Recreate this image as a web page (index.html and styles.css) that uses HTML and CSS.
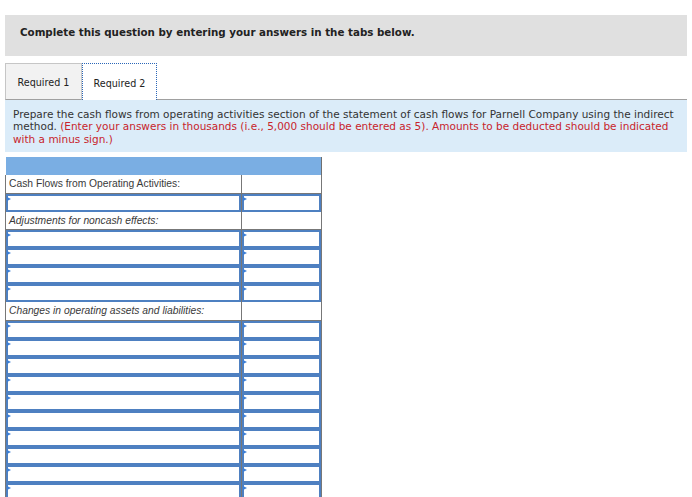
FILE: index.html
```html
<!DOCTYPE html>
<html>
<head>
<meta charset="utf-8">
<link rel="stylesheet" href="styles.css">
</head>
<body>
<div class="page">
  <div class="banner">Complete this question by entering your answers in the tabs below.</div>
  <div class="tabs">
    <div class="tab">Required 1</div>
    <div class="tab active">Required 2</div>
    <div class="tab-fill"></div>
  </div>
  <div class="instructions">Prepare the cash flows from operating activities section of the statement of cash flows for Parnell Company using the indirect method. <span class="red">(Enter your answers in thousands (i.e., 5,000 should be entered as 5). Amounts to be deducted should be indicated with a minus sign.)</span></div>
  <table class="sheet">
    <colgroup><col class="w1"><col class="w2"></colgroup>
    <tr class="head"><td colspan="2"></td></tr>
    <tr class="label"><td class="c1">Cash Flows from Operating Activities:</td><td class="c2"></td></tr>
    <tr class="in"><td><div class="box"></div></td><td><div class="box"></div></td></tr>
    <tr class="label"><td class="c1 it">Adjustments for noncash effects:</td><td class="c2"></td></tr>
    <tr class="in"><td><div class="box"></div></td><td><div class="box"></div></td></tr>
    <tr class="in"><td><div class="box"></div></td><td><div class="box"></div></td></tr>
    <tr class="in"><td><div class="box"></div></td><td><div class="box"></div></td></tr>
    <tr class="in"><td><div class="box"></div></td><td><div class="box"></div></td></tr>
    <tr class="label"><td class="c1 it">Changes in operating assets and liabilities:</td><td class="c2"></td></tr>
    <tr class="in"><td><div class="box"></div></td><td><div class="box"></div></td></tr>
    <tr class="in"><td><div class="box"></div></td><td><div class="box"></div></td></tr>
    <tr class="in"><td><div class="box"></div></td><td><div class="box"></div></td></tr>
    <tr class="in"><td><div class="box"></div></td><td><div class="box"></div></td></tr>
    <tr class="in"><td><div class="box"></div></td><td><div class="box"></div></td></tr>
    <tr class="in"><td><div class="box"></div></td><td><div class="box"></div></td></tr>
    <tr class="in"><td><div class="box"></div></td><td><div class="box"></div></td></tr>
    <tr class="in"><td><div class="box"></div></td><td><div class="box"></div></td></tr>
    <tr class="in"><td><div class="box"></div></td><td><div class="box"></div></td></tr>
    <tr class="in"><td><div class="box"></div></td><td><div class="box"></div></td></tr>
  </table>
</div>
</body>
</html>
```
FILE: styles.css
```css
html, body { margin: 0; padding: 0; background: #fff; }
body { overflow: hidden; }
.page { padding: 15px 5px 0 5px; }
.banner {
  background: #e0e0e0;
  height: 41px;
  box-sizing: border-box;
  padding: 11px 0 0 15px;
  font-family: "DejaVu Sans", Verdana, sans-serif;
  font-weight: bold;
  font-size: 10.3px;
  line-height: 13px;
  color: #222;
}
.tabs {
  margin-top: 7px;
  display: flex;
  height: 37px;
}
.tab {
  width: 75px;
  border: 1px solid #c6c6c6;
  border-bottom: 1px solid #a0a0a0;
  background: #f2f2f2;
  font-family: "DejaVu Sans", Tahoma, sans-serif;
  font-size: 9.6px;
  color: #222;
  display: flex;
  align-items: center;
  justify-content: center;
  padding-top: 2px;
}
.tab.active {
  width: 73px;
  background: #fff;
  border: 1px dotted #2a66b8;
  border-bottom: none;
}
.tab-fill { flex: 1; border-bottom: 1px solid #a0a0a0; }
.instructions {
  background: #dbecf9;
  height: 52px;
  box-sizing: border-box;
  padding: 8px 8px 0 8px;
  font-family: "DejaVu Sans", Verdana, sans-serif;
  font-size: 10.5px;
  line-height: 12.4px;
  color: #333;
}
.red { color: #c8242c; }
.sheet {
  margin-top: 5px;
  border-collapse: collapse;
  table-layout: fixed;
  width: 316px;
  font-family: "Liberation Sans", Arial, sans-serif;
  font-size: 10.3px;
  color: #3a3a3a;
}
.w1 { width: 236px; }
.w2 { width: 80px; }
.sheet td { padding: 0; }
.sheet tr { height: 18px; }
.head td { background: #7aaee3; height: 18px; border-right: 1px solid #6f6f6f; }
.label td { border: 1px solid #777; border-top: none; white-space: nowrap; overflow: hidden; }
.label td.c1 { padding-left: 3px; }
.it { font-style: italic; }
.in td { border-left: 1px solid #777; border-right: 1px solid #777; }
.box {
  position: relative;
  height: 14px;
  border: 2px solid #4e80c1;
}
.box::before {
  content: "";
  position: absolute;
  left: -1px;
  top: 1px;
  border-left: 4px solid #3d7fd6;
  border-top: 2.5px solid transparent;
  border-bottom: 2.5px solid transparent;
}
```
